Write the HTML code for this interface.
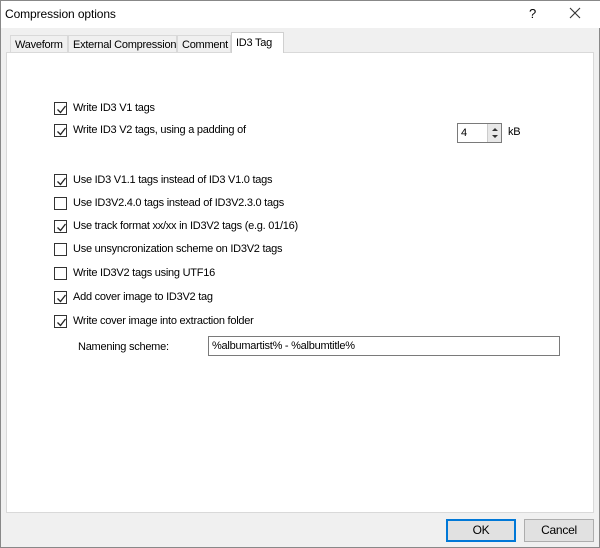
<!DOCTYPE html>
<html><head><meta charset="utf-8"><style>
*{margin:0;padding:0;box-sizing:border-box}
body{width:600px;height:548px;background:#f0f0f0;font-family:"Liberation Sans",Arial,sans-serif;font-size:11px;letter-spacing:-0.25px;color:#000;position:relative;overflow:hidden;border:1px solid #888}
.title{position:absolute;left:0;top:0;width:600px;height:27px;background:#fff}
.title .t{position:absolute;left:4px;top:6px;font-size:12px;letter-spacing:-0.1px}
.title .q{position:absolute;left:528px;top:5px;font-size:13px}
.title .x{position:absolute;left:568px;top:6px}
.tab{position:absolute;top:34px;height:18px;border:1px solid #d9d9d9;border-bottom:none;background:#f0f0f0;padding:3px 4px 0;font-size:11px;white-space:nowrap;overflow:hidden}
.tab.a{top:31px;height:21px;background:#fff;border-color:#d0d0d0;padding-top:4px;z-index:2}
.panel{position:absolute;left:5px;top:51px;width:588px;height:461px;background:#fff;border:1px solid #d9d9d9}
.cb{position:absolute;left:53px;width:13px;height:13px;border:1px solid #333;background:#fff}
.cb svg{position:absolute;left:1px;top:1px}
.lb{position:absolute;left:72px;font-size:11px;white-space:nowrap}
.inp{position:absolute;background:#fff;border:1px solid #7a7a7a}
.btn{position:absolute;top:518px;height:23px;width:70px;background:#e1e1e1;border:1px solid #adadad;text-align:center;line-height:21px;font-size:12px}
</style></head><body>
<div class="title"><span class="t">Compression options</span><span class="q">?</span>
<svg class="x" width="12" height="12"><path d="M1 1L11 11M11 1L1 11" stroke="#333" stroke-width="1.1"/></svg></div>
<div class="tab" style="left:9px;width:58px">Waveform</div>
<div class="tab" style="left:67px;width:109px">External Compression</div>
<div class="tab" style="left:176px;width:54px">Comment</div>
<div class="tab a" style="left:230px;width:53px">ID3 Tag</div>
<div class="panel"></div>

<div class="cb" style="top:101px"><svg width="11" height="11"><path d="M1.5 5.5L4.5 8.5L9.5 2" stroke="#222" fill="none" stroke-width="1.3"/></svg></div><div class="lb" style="top:101px">Write ID3 V1 tags</div>
<div class="cb" style="top:123px"><svg width="11" height="11"><path d="M1.5 5.5L4.5 8.5L9.5 2" stroke="#222" fill="none" stroke-width="1.3"/></svg></div><div class="lb" style="top:123px">Write ID3 V2 tags, using a padding of</div>
<div class="inp" style="left:456px;top:122px;width:45px;height:20px"><span style="position:absolute;left:3px;top:3px">4</span>
<div style="position:absolute;left:29px;top:0;width:14px;height:18px;background:#e8e8e8;border-left:1px solid #ccc"><svg width="14" height="18"><path d="M4 7L7 4L10 7Z M4 11L7 14L10 11Z" fill="#333"/></svg></div></div>
<div class="lb" style="left:507px;top:125px">kB</div>

<div class="cb" style="top:173px"><svg width="11" height="11"><path d="M1.5 5.5L4.5 8.5L9.5 2" stroke="#222" fill="none" stroke-width="1.3"/></svg></div><div class="lb" style="top:173px">Use ID3 V1.1 tags instead of ID3 V1.0 tags</div>
<div class="cb" style="top:196px"></div><div class="lb" style="top:196px">Use ID3V2.4.0 tags instead of ID3V2.3.0 tags</div>
<div class="cb" style="top:219px"><svg width="11" height="11"><path d="M1.5 5.5L4.5 8.5L9.5 2" stroke="#222" fill="none" stroke-width="1.3"/></svg></div><div class="lb" style="top:219px">Use track format xx/xx in ID3V2 tags (e.g. 01/16)</div>
<div class="cb" style="top:242px"></div><div class="lb" style="top:242px">Use unsyncronization scheme on ID3V2 tags</div>
<div class="cb" style="top:266px"></div><div class="lb" style="top:266px">Write ID3V2 tags using UTF16</div>
<div class="cb" style="top:290px"><svg width="11" height="11"><path d="M1.5 5.5L4.5 8.5L9.5 2" stroke="#222" fill="none" stroke-width="1.3"/></svg></div><div class="lb" style="top:290px">Add cover image to ID3V2 tag</div>
<div class="cb" style="top:314px"><svg width="11" height="11"><path d="M1.5 5.5L4.5 8.5L9.5 2" stroke="#222" fill="none" stroke-width="1.3"/></svg></div><div class="lb" style="top:314px">Write cover image into extraction folder</div>
<div class="lb" style="left:77px;top:340px">Namening scheme:</div>
<div class="inp" style="left:207px;top:335px;width:352px;height:20px"><span style="position:absolute;left:3px;top:3px">%albumartist% - %albumtitle%</span></div>

<div class="btn" style="left:445px;border:1px solid #0078d7;background:#e1e1e1;box-shadow:inset 0 0 0 1px #0078d7">OK</div>
<div class="btn" style="left:523px">Cancel</div>
</body></html>
